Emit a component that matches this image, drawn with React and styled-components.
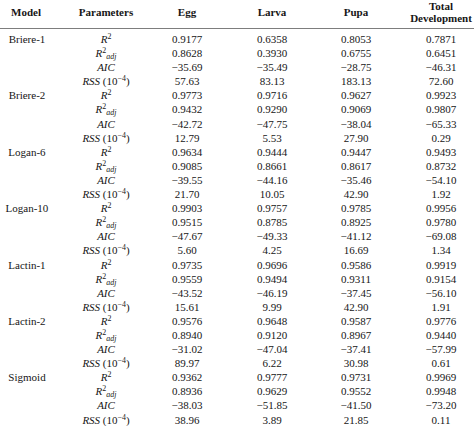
import React from 'react'
import styled, { createGlobalStyle } from 'styled-components'

const GlobalStyle = createGlobalStyle`
    html, body {
        margin: 0;
        padding: 0;
        background: #ffffff;
        overflow: hidden;
    }
`

const models = [
    {
        name: 'Briere-1',
        rows: [
            ['0.9177', '0.6358', '0.8053', '0.7871'],
            ['0.8628', '0.3930', '0.6755', '0.6451'],
            ['\u221235.69', '\u221235.49', '\u221228.75', '\u221246.31'],
            ['57.63', '83.13', '183.13', '72.60'],
        ],
    },
    {
        name: 'Briere-2',
        rows: [
            ['0.9773', '0.9716', '0.9627', '0.9923'],
            ['0.9432', '0.9290', '0.9069', '0.9807'],
            ['\u221242.72', '\u221247.75', '\u221238.04', '\u221265.33'],
            ['12.79', '5.53', '27.90', '0.29'],
        ],
    },
    {
        name: 'Logan-6',
        rows: [
            ['0.9634', '0.9444', '0.9447', '0.9493'],
            ['0.9085', '0.8661', '0.8617', '0.8732'],
            ['\u221239.55', '\u221244.16', '\u221235.46', '\u221254.10'],
            ['21.70', '10.05', '42.90', '1.92'],
        ],
    },
    {
        name: 'Logan-10',
        rows: [
            ['0.9903', '0.9757', '0.9785', '0.9956'],
            ['0.9515', '0.8785', '0.8925', '0.9780'],
            ['\u221247.67', '\u221249.33', '\u221241.12', '\u221269.08'],
            ['5.60', '4.25', '16.69', '1.34'],
        ],
    },
    {
        name: 'Lactin-1',
        rows: [
            ['0.9735', '0.9696', '0.9586', '0.9919'],
            ['0.9559', '0.9494', '0.9311', '0.9154'],
            ['\u221243.52', '\u221246.19', '\u221237.45', '\u221256.10'],
            ['15.61', '9.99', '42.90', '1.91'],
        ],
    },
    {
        name: 'Lactin-2',
        rows: [
            ['0.9576', '0.9648', '0.9587', '0.9776'],
            ['0.8940', '0.9120', '0.8967', '0.9440'],
            ['\u221231.02', '\u221247.04', '\u221237.41', '\u221257.99'],
            ['89.97', '6.22', '30.98', '0.61'],
        ],
    },
    {
        name: 'Sigmoid',
        rows: [
            ['0.9362', '0.9777', '0.9731', '0.9969'],
            ['0.8936', '0.9629', '0.9552', '0.9948'],
            ['\u221238.03', '\u221251.85', '\u221241.50', '\u221273.20'],
            ['38.96', '3.89', '21.85', '0.11'],
        ],
    },
]

const Param = ({ index }) => {
    if (index === 0) return <><Em>R</Em><Sup>2</Sup></>
    if (index === 1) return <><Em>R</Em><Sup>2</Sup><Sub>adj</Sub></>
    if (index === 2) return <Em>AIC</Em>
    return <><Em>RSS</Em> (10<Sup>{'\u22124'}</Sup>)</>
}

const App = () => {
    return (
        <Wrapper>
            <GlobalStyle />
            <Table>
                <colgroup>
                    <col style={{ width: 52 }} />
                    <col style={{ width: 108 }} />
                    <col style={{ width: 54 }} />
                    <col style={{ width: 116 }} />
                    <col style={{ width: 52 }} />
                    <col style={{ width: 118 }} />
                </colgroup>
                <thead>
                    <tr>
                        <HeadCell>Model</HeadCell>
                        <HeadCell>Parameters</HeadCell>
                        <HeadCell>Egg</HeadCell>
                        <HeadCell>Larva</HeadCell>
                        <HeadCell>Pupa</HeadCell>
                        <HeadCell>Total<br />Development</HeadCell>
                    </tr>
                </thead>
                <tbody>
                    {models.map((model, m) =>
                        model.rows.map((row, i) => (
                            <Row key={model.name + i} $first={m === 0 && i === 0}>
                                <ModelCell>{i === 0 ? model.name : ''}</ModelCell>
                                <Cell><Param index={i} /></Cell>
                                {row.map((value, k) => (
                                    <Cell key={k}>{value}</Cell>
                                ))}
                            </Row>
                        ))
                    )}
                </tbody>
            </Table>
        </Wrapper>
    )
}

const Wrapper = styled.div`
    width: 474px;
    height: 426px;
    overflow: hidden;
`

const Table = styled.table`
    width: 500px;
    table-layout: fixed;
    border-collapse: collapse;
    font-family: "Liberation Serif", "DejaVu Serif", serif;
    font-size: 11px;
    color: #161616;
`

const HeadCell = styled.th`
    height: 28px;
    padding: 0 0 4px 0;
    box-sizing: border-box;
    font-weight: 700;
    line-height: 12px;
    text-align: center;
    vertical-align: middle;
    white-space: nowrap;
    border-bottom: 1px solid #7d7d7d;
`

const Row = styled.tr`
    td {
        padding-top: ${props => props.$first ? '3px' : '0'};
    }
`

const Cell = styled.td`
    padding: 0;
    line-height: 14.1px;
    text-align: center;
    white-space: nowrap;
`

const ModelCell = styled(Cell)`
    padding-left: 2px;
`

const Em = styled.i`
    font-style: italic;
`

const Sup = styled.sup`
    font-size: 0.72em;
    line-height: 0;
    vertical-align: 0.45em;
`

const Sub = styled.sub`
    font-size: 0.72em;
    font-style: italic;
    line-height: 0;
    vertical-align: -0.3em;
`

export default App
